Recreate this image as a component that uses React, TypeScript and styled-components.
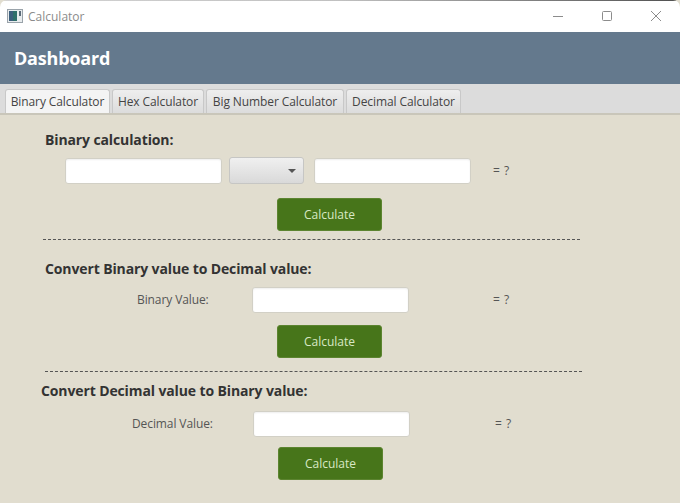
import * as React from 'react'
import styled, { createGlobalStyle } from 'styled-components'

const GlobalStyle = createGlobalStyle`
    html, body {
        margin: 0;
        padding: 0;
        background: #e1ddcf;
    }
    body {
        font-family: 'Open Sans', 'Noto Sans', 'Liberation Sans', sans-serif;
    }
`

const Window = styled.div`
    width: 680px;
    height: 503px;
    overflow: hidden;
    display: flex;
    flex-direction: column;
    background: #e1ddcf;
`

const TitleBar = styled.div`
    height: 32px;
    flex: none;
    box-sizing: border-box;
    background: linear-gradient(90deg, #d4d4d4, #c0c0c0 50%, #505050) top / 100% 1px no-repeat, #ffffff;
    display: flex;
    align-items: center;
    padding-left: 7px;
    border-radius: 7px 7px 0 0;
`

const TitleText = styled.span`
    margin-left: 5px;
    font-size: 12px;
    color: #8b8b8b;
`

const WindowButtons = styled.div`
    margin-left: auto;
    display: flex;
    align-items: center;
`

const WindowButton = styled.div`
    width: 49px;
    height: 32px;
    display: flex;
    align-items: center;
    justify-content: center;
`

const Header = styled.div`
    height: 52px;
    flex: none;
    background: #64798d;
    display: flex;
    align-items: center;
    padding-left: 14px;
`

const HeaderTitle = styled.h1`
    margin: 0;
    font-size: 18px;
    font-weight: 700;
    letter-spacing: -0.2px;
    color: #ffffff;
`

const TabBar = styled.div`
    height: 31px;
    flex: none;
    box-sizing: border-box;
    background: #dcdcdc;
    border-bottom: 2px solid #c9c6ba;
    display: flex;
    align-items: flex-end;
    gap: 2px;
    padding-left: 5px;
`

const Tab = styled.div<{ $active?: boolean; $width: number }>`
    width: ${(p) => p.$width}px;
    height: 24px;
    box-sizing: border-box;
    display: flex;
    align-items: center;
    justify-content: center;
    font-size: 12px;
    letter-spacing: -0.1px;
    white-space: nowrap;
    color: #444444;
    border-radius: 3px 3px 0 0;
    border: 1px solid #c8c8c8;
    border-bottom: none;
    background: ${(p) =>
        p.$active ? '#f4f4f4' : 'linear-gradient(#eeeeee, #dcdcdc)'};
`

const Content = styled.div`
    flex: 1;
    padding-top: 15px;
`

const Heading = styled.h2<{ $left: number; $top: number }>`
    margin: ${(p) => p.$top}px 0 0 ${(p) => p.$left}px;
    font-size: 14px;
    line-height: 20px;
    font-weight: 700;
    letter-spacing: -0.12px;
    color: #333333;
`

const Row = styled.div<{ $left: number; $top: number }>`
    display: flex;
    align-items: flex-start;
    height: 26px;
    line-height: 26px;
    margin: ${(p) => p.$top}px 0 0 ${(p) => p.$left}px;
`

const Field = styled.div<{ $right: number }>`
    width: 157px;
    height: 26px;
    box-sizing: border-box;
    flex: none;
    margin-right: ${(p) => p.$right}px;
    background: #ffffff;
    border: 1px solid #d2d0c6;
    border-radius: 3px;
    box-shadow: inset 0 1px 2px #eeeeee;
`

const Select = styled.div`
    width: 75px;
    height: 27px;
    flex: none;
    box-sizing: border-box;
    margin: -1px 10px 0 0;
    border: 1px solid #c6c6c4;
    border-radius: 3px;
    background: linear-gradient(#f0f0f0, #d9d9d9);
    display: flex;
    align-items: center;
    justify-content: flex-end;
    padding-right: 7px;
`

const Arrow = styled.span`
    width: 0;
    height: 0;
    border-left: 4px solid transparent;
    border-right: 4px solid transparent;
    border-top: 4px solid #555555;
`

const FieldLabel = styled.span<{ $width: number }>`
    width: ${(p) => p.$width}px;
    flex: none;
    font-size: 12px;
    letter-spacing: -0.1px;
    color: #555555;
    white-space: nowrap;
`

const Result = styled.span`
    font-size: 12px;
    letter-spacing: 0.5px;
    color: #555555;
`

const CalcButton = styled.button<{ $left: number; $top: number }>`
    display: block;
    width: 105px;
    height: 33px;
    margin: ${(p) => p.$top}px 0 0 ${(p) => p.$left}px;
    padding: 0 0 1px;
    font-family: inherit;
    font-size: 12px;
    color: #d8e8c4;
    background: #47751a;
    border: 1px solid #5c8430;
    border-radius: 3px;
`

const Divider = styled.div<{ $left: number; $width: number; $top: number }>`
    width: ${(p) => p.$width}px;
    margin: ${(p) => p.$top}px 0 0 ${(p) => p.$left}px;
    border-top: 1px dashed #555555;
`

const AppIcon = () => (
    <svg width='16' height='14' viewBox='0 0 16 14'>
        <rect x='0.5' y='0.5' width='15' height='13' fill='#e8ecee' stroke='#9aa3aa' />
        <rect x='2' y='2' width='8' height='10' fill='#2f6f6a' />
        <rect x='2' y='2' width='4' height='10' fill='#3d5f7d' />
        <rect x='12' y='2' width='2' height='5' fill='#5a6a78' />
    </svg>
)

const App: React.FC = () => (
    <Window>
        <GlobalStyle />
        <TitleBar>
            <AppIcon />
            <TitleText>Calculator</TitleText>
            <WindowButtons>
                <WindowButton>
                    <svg width='12' height='12' viewBox='0 0 12 12'>
                        <path d='M1 6.5h10' stroke='#8c8c8c' fill='none' />
                    </svg>
                </WindowButton>
                <WindowButton>
                    <svg width='12' height='12' viewBox='0 0 12 12'>
                        <rect x='1.5' y='1.5' width='9' height='9' rx='1' stroke='#8c8c8c' fill='none' />
                    </svg>
                </WindowButton>
                <WindowButton>
                    <svg width='12' height='12' viewBox='0 0 12 12'>
                        <path d='M1 1l10 10M11 1L1 11' stroke='#8c8c8c' fill='none' />
                    </svg>
                </WindowButton>
            </WindowButtons>
        </TitleBar>
        <Header>
            <HeaderTitle>Dashboard</HeaderTitle>
        </Header>
        <TabBar>
            <Tab $active $width={105}>Binary Calculator</Tab>
            <Tab $width={92}>Hex Calculator</Tab>
            <Tab $width={138}>Big Number Calculator</Tab>
            <Tab $width={115}>Decimal Calculator</Tab>
        </TabBar>
        <Content>
            <Heading $left={45} $top={0}>Binary calculation:</Heading>
            <Row $left={65} $top={8}>
                <Field $right={7} />
                <Select>
                    <Arrow />
                </Select>
                <Field $right={22} />
                <Result>= ?</Result>
            </Row>
            <CalcButton $left={277} $top={14}>Calculate</CalcButton>
            <Divider $left={43} $width={537} $top={8} />
            <Heading $left={45} $top={19}>
                Convert Binary value to Decimal value:
            </Heading>
            <Row $left={137} $top={8}>
                <FieldLabel $width={115}>Binary Value:</FieldLabel>
                <Field $right={84} />
                <Result>= ?</Result>
            </Row>
            <CalcButton $left={277} $top={12}>Calculate</CalcButton>
            <Divider $left={45} $width={537} $top={13} />
            <Heading $left={41} $top={9}>
                Convert Decimal value to Binary value:
            </Heading>
            <Row $left={132} $top={10}>
                <FieldLabel $width={121}>Decimal Value:</FieldLabel>
                <Field $right={85} />
                <Result>= ?</Result>
            </Row>
            <CalcButton $left={278} $top={10}>Calculate</CalcButton>
        </Content>
    </Window>
)

export default App
